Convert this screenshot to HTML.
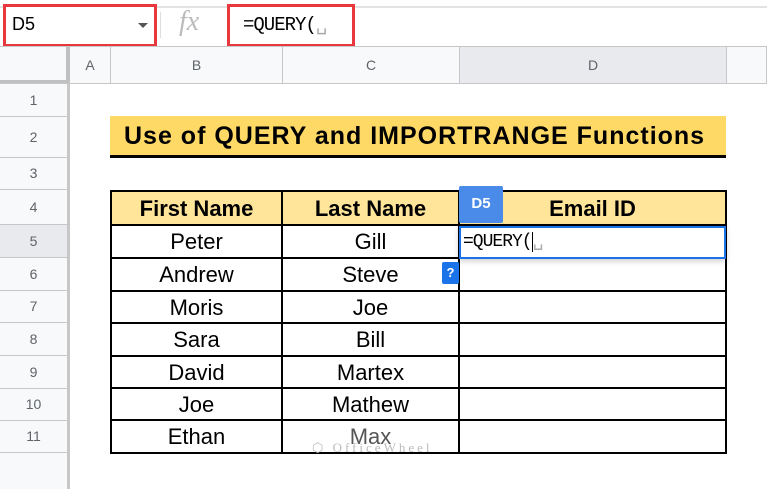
<!DOCTYPE html><html><head><style>
body{margin:0;width:767px;height:489px;overflow:hidden;background:#fff;font-family:"Liberation Sans",Arial,sans-serif;position:relative}
.a{position:absolute;box-sizing:border-box}
.ch{top:47px;height:37px;background:#f8f9fa;border-right:1px solid #c7c7c7;color:#5f6368;font-size:14px;text-align:center;line-height:37px}
.rh{left:0;width:70px;background:#f8f9fa;border-right:3px solid #c7c7c7;border-bottom:1px solid #c7c7c7;color:#5f6368;font-size:14px;text-align:center}
.c{border-right:2px solid #000;border-bottom:2px solid #000;font-size:22px;text-align:center;color:#000}
</style></head><body>
<div class="a" style="left:0;top:6px;width:767px;height:2px;background:#e3e3e3"></div>
<div class="a" style="left:3px;top:4px;width:154px;height:43px;border:3px solid #e8383d;background:#fff"></div>
<div class="a" style="left:12px;top:14px;font-size:18px">D5</div>
<div class="a" style="left:138px;top:23px;width:0;height:0;border-left:5px solid transparent;border-right:5px solid transparent;border-top:5px solid #555"></div>
<div class="a" style="left:160px;top:12px;width:1px;height:26px;background:#ddd"></div>
<div class="a" style="left:179px;top:6px;font-family:'Liberation Serif',serif;font-style:italic;font-size:28px;color:#bbb">fx</div>
<div class="a" style="left:227px;top:4px;width:128px;height:43px;border:3px solid #e8383d;background:#fff"></div>
<div class="a" style="left:243px;top:13px;font-size:19px;font-family:'Liberation Mono',monospace;letter-spacing:-1px">=QUERY(<span style="color:#aaa">␣</span></div>
<div class="a" style="left:0;top:46px;width:767px;height:1px;background:#c7c7c7"></div>
<div class="a" style="left:0;top:47px;width:70px;height:37px;background:#f8f9fa;border-right:4px solid #c0c0c0;border-bottom:4px solid #c0c0c0"></div>
<div class="a ch" style="left:70px;width:41px">A</div>
<div class="a ch" style="left:111px;width:172px">B</div>
<div class="a ch" style="left:283px;width:177px">C</div>
<div class="a ch" style="left:460px;width:267px;background:#e8eaed">D</div>
<div class="a ch" style="left:727px;width:40px"></div>
<div class="a" style="left:0;top:83px;width:767px;height:1px;background:#c7c7c7"></div>
<div class="a rh" style="top:84px;height:33px;line-height:32px">1</div>
<div class="a rh" style="top:117px;height:41px;line-height:40px">2</div>
<div class="a rh" style="top:158px;height:32px;line-height:31px">3</div>
<div class="a rh" style="top:190px;height:35px;line-height:34px">4</div>
<div class="a rh" style="top:225px;height:33px;line-height:32px;background:#e8eaed">5</div>
<div class="a rh" style="top:258px;height:33px;line-height:32px">6</div>
<div class="a rh" style="top:291px;height:32px;line-height:31px">7</div>
<div class="a rh" style="top:323px;height:33px;line-height:32px">8</div>
<div class="a rh" style="top:356px;height:33px;line-height:32px">9</div>
<div class="a rh" style="top:389px;height:32px;line-height:31px">10</div>
<div class="a rh" style="top:421px;height:32px;line-height:31px">11</div>
<div class="a rh" style="top:453px;height:36px;border-bottom:none"></div>
<div class="a" style="left:110px;top:116px;width:616px;height:42px;background:#ffd966;border-bottom:3px solid #000;font-weight:bold;font-size:25px;letter-spacing:1px;line-height:40px;padding-left:14px;white-space:nowrap">Use of QUERY and IMPORTRANGE Functions</div>
<div class="a" style="left:110px;top:190px;width:617px;height:263px;border-left:2px solid #000;border-top:2px solid #000"></div>
<div class="a c" style="left:110px;top:190px;width:173px;height:36px;background:#ffe599;font-weight:bold;border-left:2px solid #000;border-top:2px solid #000;line-height:33px">First Name</div>
<div class="a c" style="left:283px;top:190px;width:177px;height:36px;background:#ffe599;font-weight:bold;border-top:2px solid #000;line-height:33px">Last Name</div>
<div class="a c" style="left:460px;top:190px;width:267px;height:36px;background:#ffe599;font-weight:bold;border-top:2px solid #000;line-height:33px">Email ID</div>
<div class="a c" style="left:110px;top:226px;width:173px;height:33px;border-left:2px solid #000;line-height:32px">Peter</div><div class="a c" style="left:283px;top:226px;width:177px;height:33px;line-height:32px">Gill</div><div class="a c" style="left:460px;top:226px;width:267px;height:33px"></div>
<div class="a c" style="left:110px;top:259px;width:173px;height:33px;border-left:2px solid #000;line-height:32px">Andrew</div><div class="a c" style="left:283px;top:259px;width:177px;height:33px;line-height:32px">Steve</div><div class="a c" style="left:460px;top:259px;width:267px;height:33px"></div>
<div class="a c" style="left:110px;top:292px;width:173px;height:32px;border-left:2px solid #000;line-height:31px">Moris</div><div class="a c" style="left:283px;top:292px;width:177px;height:32px;line-height:31px">Joe</div><div class="a c" style="left:460px;top:292px;width:267px;height:32px"></div>
<div class="a c" style="left:110px;top:324px;width:173px;height:33px;border-left:2px solid #000;line-height:32px">Sara</div><div class="a c" style="left:283px;top:324px;width:177px;height:33px;line-height:32px">Bill</div><div class="a c" style="left:460px;top:324px;width:267px;height:33px"></div>
<div class="a c" style="left:110px;top:357px;width:173px;height:32px;border-left:2px solid #000;line-height:31px">David</div><div class="a c" style="left:283px;top:357px;width:177px;height:32px;line-height:31px">Martex</div><div class="a c" style="left:460px;top:357px;width:267px;height:32px"></div>
<div class="a c" style="left:110px;top:389px;width:173px;height:32px;border-left:2px solid #000;line-height:31px">Joe</div><div class="a c" style="left:283px;top:389px;width:177px;height:32px;line-height:31px">Mathew</div><div class="a c" style="left:460px;top:389px;width:267px;height:32px"></div>
<div class="a c" style="left:110px;top:421px;width:173px;height:33px;border-left:2px solid #000;line-height:32px">Ethan</div><div class="a c" style="left:283px;top:421px;width:177px;height:33px;line-height:32px;color:#555">Max</div><div class="a c" style="left:460px;top:421px;width:267px;height:33px"></div>
<div class="a" style="left:312px;top:440px;font-size:13px;letter-spacing:3px;color:#bbb;font-family:'Liberation Serif',serif">⬡ OfficeWheel</div>
<div class="a" style="left:459px;top:226px;width:267px;height:33px;border:2px solid #1a73e8;background:#fff;box-shadow:0 2px 6px rgba(0,0,0,.2);font-family:'Liberation Mono',monospace;font-size:18px;letter-spacing:-1px;padding-left:2px;line-height:28px">=QUERY(<span style="border-left:1px solid #000"></span><span style="color:#aaa">␣</span></div>
<div class="a" style="left:459px;top:186px;width:44px;height:37px;background:#4a8ae8;color:#fff;font-weight:bold;font-size:15px;text-align:center;line-height:36px;border-radius:2px">D5</div>
<div class="a" style="left:442px;top:262px;width:17px;height:22px;background:#1a73e8;color:#fff;font-weight:bold;font-size:13px;text-align:center;line-height:22px;border-radius:2px">?</div>
</body></html>
